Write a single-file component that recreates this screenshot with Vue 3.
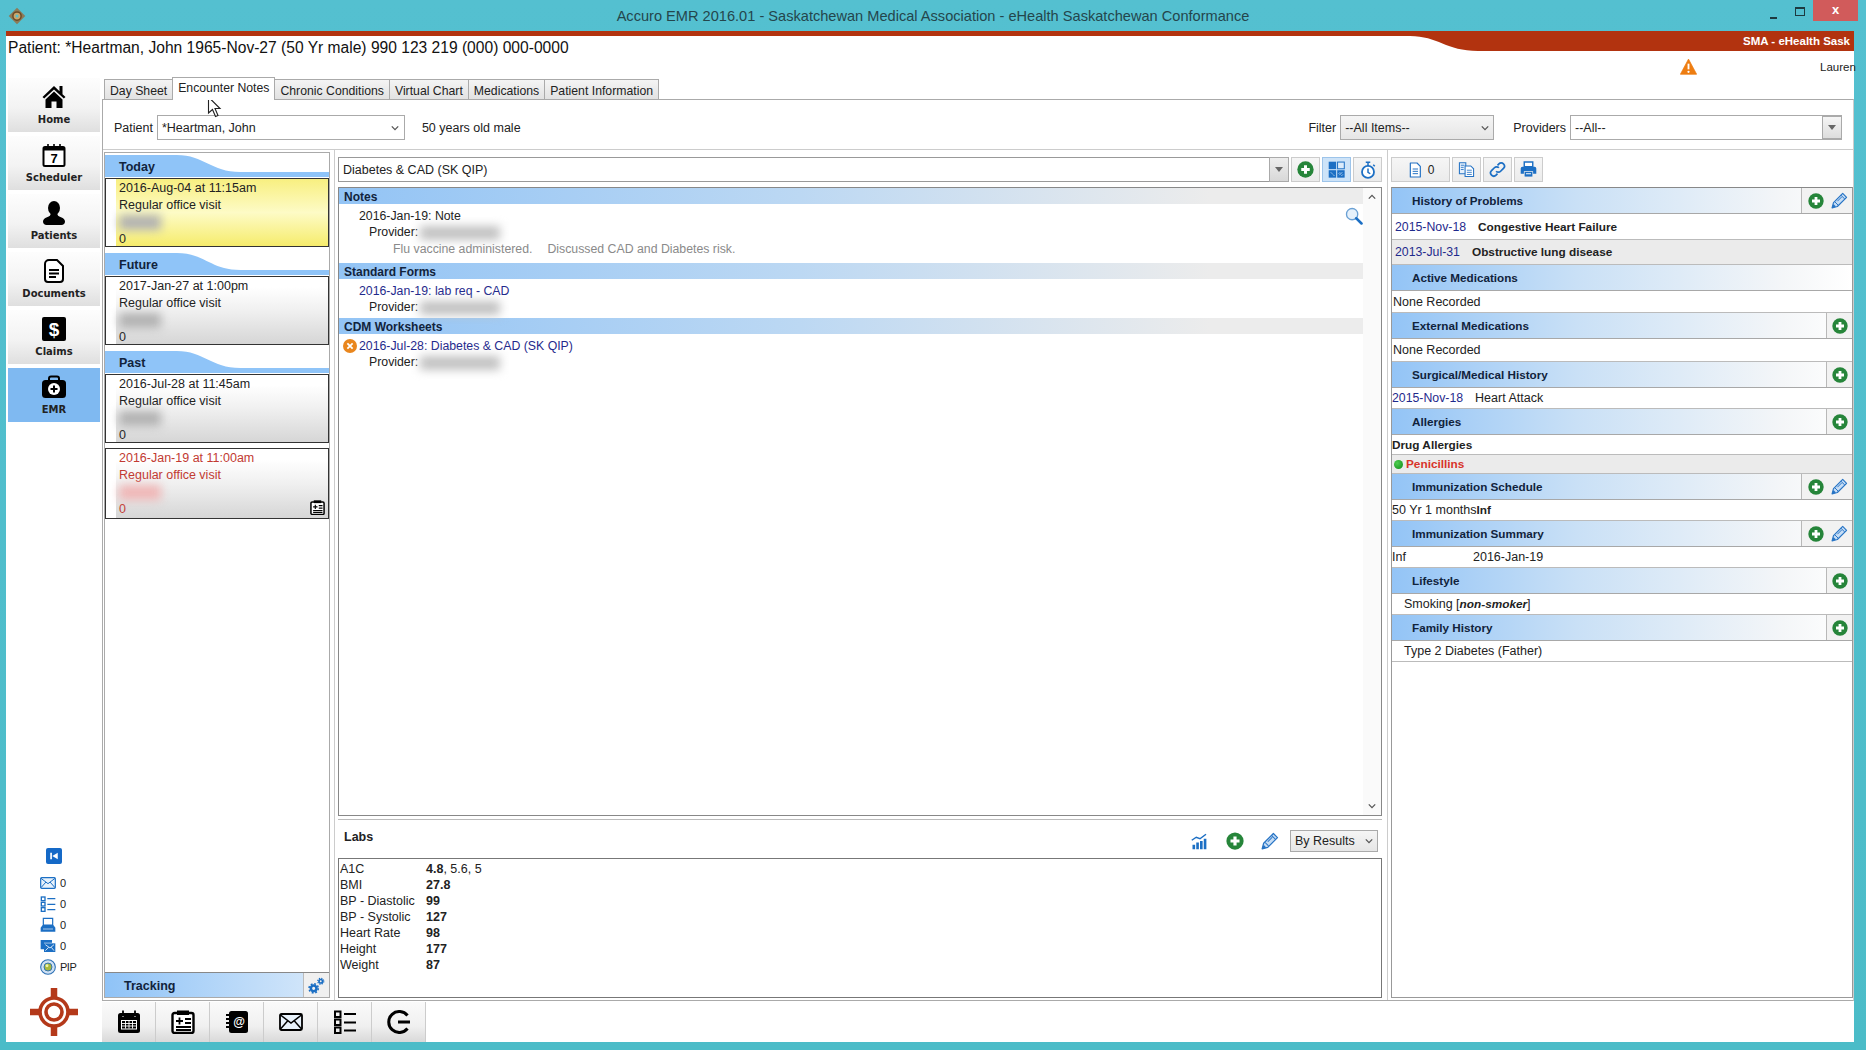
<template>
  <div class="app">
    <!-- icon sprite -->
    <svg class="sprite" aria-hidden="true">
      <defs>
        <symbol id="i-home" viewBox="0 0 24 24"><path d="M12 1 0.5 12l1.7 1.6L12 4.4l9.8 9.2 1.7-1.6-3-2.8V1h-3v5.3z"/><path d="M3.5 14.6 12 6.6l8.500 8V23H14.500v-6.500h-5V23H3.500z"/></symbol>
        <symbol id="i-cal" viewBox="0 0 24 24"><rect x="1.500" y="4" width="21" height="19" rx="1.500" fill="#fff" stroke="#000" stroke-width="2"/><path d="M1.500 4h21v3.500h-21z"/><path d="M6 1v5M12 1v5M18 1v5" stroke="#000" stroke-width="1.600"/><text x="12" y="20" text-anchor="middle" font-size="13" font-weight="700" font-family="Liberation Sans, sans-serif">7</text></symbol>
        <symbol id="i-person" viewBox="0 0 24 24"><ellipse cx="12" cy="7" rx="6" ry="7"/><path d="M8.500 12c.5 2.500-1 3.200-3.500 4.200C2.500 17.200 1 18.500 1 20.500 1 22.500 2.500 24 4.500 24h15c2 0 3.500-1.500 3.500-3.500 0-2-1.500-3.300-4-4.300-2.500-1-4-1.700-3.500-4.200z"/></symbol>
        <symbol id="i-doc" viewBox="0 0 24 24"><path d="M7 1h8l6 6v13a3 3 0 0 1-3 3H6a3 3 0 0 1-3-3V5a4 4 0 0 1 4-4z" fill="#fff" stroke="#000" stroke-width="2"/><path d="M7 11h10M7 14.500h10M7 18h7" stroke="#000" stroke-width="1.800"/></symbol>
        <symbol id="i-claim" viewBox="0 0 24 24"><rect width="24" height="24" rx="2"/><text x="12" y="19" text-anchor="middle" fill="#fff" font-size="19" font-weight="700" font-family="Liberation Sans, sans-serif">$</text></symbol>
        <symbol id="i-bag" viewBox="0 0 24 24"><path d="M7 6V3.500A2 2 0 0 1 9 1.500h6a2 2 0 0 1 2 2V6" fill="none" stroke="#000" stroke-width="2"/><rect y="5" width="24" height="18" rx="3.500"/><circle cx="12" cy="14" r="6" fill="#fff"/><path d="M12 10.500v7M8.500 14h7" stroke="#000" stroke-width="2"/></symbol>
        <symbol id="i-add" viewBox="0 0 24 24"><circle cx="12" cy="12" r="11.500" fill="#26853a"/><path d="M12 6v12M6 12h12" stroke="#fff" stroke-width="4.200"/></symbol>
        <symbol id="i-pencil" viewBox="0 0 24 24"><path d="M1.500 22.500 3.500 15 16.500 2l5.500 5.500L9 20.500z" fill="#c6ddf5" stroke="#2673c4" stroke-width="1.600" stroke-linejoin="round"/><path d="M14 4.500l5.500 5.500M5.500 14l4.500 4.500M9 13l6-6" fill="none" stroke="#2673c4" stroke-width="1.400"/><path d="M1.500 22.500 3.500 17l3.500 3.500z" fill="#2673c4"/></symbol>
        <symbol id="i-grid" viewBox="0 0 24 24"><rect x="1" y="1" width="10.500" height="10.500" fill="#1c6fc4"/><rect x="13.500" y="1.500" width="9.500" height="9.500" fill="#dcebfa" stroke="#1c6fc4" stroke-width="1.400"/><rect x="1" y="13" width="10.500" height="10.500" fill="#1c6fc4"/><rect x="13" y="13" width="10.500" height="10.500" fill="#1c6fc4"/><path d="M4 16l2 2M7 19l2 2M16 20l4-4M15 18l2-2M19 21l2-2" stroke="#cfe3f8" stroke-width="1.200"/></symbol>
        <symbol id="i-timer" viewBox="0 0 24 24"><circle cx="12" cy="14.500" r="8" fill="#fff" stroke="#1c6fc4" stroke-width="2.400"/><path d="M9 1.500h6M12 1.500v5M19 5l2 2M12 10v5l3 2" fill="none" stroke="#1c6fc4" stroke-width="2"/></symbol>
        <symbol id="i-page" viewBox="0 0 24 24"><path d="M5 1.500h10l5 5V22.500H5z" fill="#fff" stroke="#2673c4" stroke-width="1.800" stroke-linejoin="round"/><path d="M8.500 10.500h8M8.500 14h8M8.500 17.500h8" stroke="#2673c4" stroke-width="1.500"/></symbol>
        <symbol id="i-copy" viewBox="0 0 24 24"><path d="M2 2.500h9V18H2z" fill="#e6f0fb" stroke="#2673c4" stroke-width="1.500"/><path d="M10 7h8l4 4v11H10z" fill="#fff" stroke="#2673c4" stroke-width="1.500"/><path d="M12.500 13h7M12.500 16h7M12.500 19h7M4 6h5M4 9h4M4 12h4" stroke="#2673c4" stroke-width="1.200"/></symbol>
        <symbol id="i-link" viewBox="0 0 24 24"><g fill="none" stroke="#1c6fc4" stroke-width="2.400"><path d="M10 14.500a4.500 4.500 0 0 0 6.400 0l4-4a4.500 4.500 0 0 0-6.400-6.400l-2 2"/><path d="M14 9.500a4.500 4.500 0 0 0-6.400 0l-4 4a4.500 4.500 0 0 0 6.400 6.400l2-2"/></g></symbol>
        <symbol id="i-print" viewBox="0 0 24 24"><path d="M6 1.500h12V8H6z" fill="#fff" stroke="#1c6fc4" stroke-width="2"/><path d="M3.500 8h17A2.500 2.500 0 0 1 23 10.500V18h-4.500v-3.500h-13V18H1v-7.500A2.500 2.500 0 0 1 3.500 8z" fill="#1c6fc4"/><path d="M6.500 15.500h11V22h-11z" fill="#1c6fc4"/><path d="M8.500 18h7" stroke="#fff" stroke-width="1.400"/></symbol>
        <symbol id="i-search" viewBox="0 0 24 24"><circle cx="9.500" cy="9.500" r="7.500" fill="#e6f1fb" stroke="#6aa0d4" stroke-width="1.800"/><path d="M15 15l7 7" stroke="#1c6fc4" stroke-width="3.400" stroke-linecap="round"/></symbol>
        <symbol id="i-chart" viewBox="0 0 24 24"><path d="M2 17h3.500v6H2zM7 14h3.500v9H7zM12 12h3.500v11H12zM17 9h3.500v14H17z" fill="#1c6fc4"/><path d="M1 11l6-4 5 2 8-6" fill="none" stroke="#1c6fc4" stroke-width="2"/></symbol>
        <symbol id="i-warn" viewBox="0 0 24 24"><path d="M12 1.500 23.500 23H.5z" fill="#ee7d11" stroke="#ee7d11" stroke-linejoin="round"/><path d="M12 8v8" stroke="#fff" stroke-width="2.600"/><circle cx="12" cy="19.500" r="1.600" fill="#fff"/></symbol>
        <symbol id="i-gears" viewBox="0 0 24 24"><g fill="none" stroke="#1c6fc4"><circle cx="8" cy="16" r="4" stroke-width="3.600"/><circle cx="8" cy="16" r="6.500" stroke-width="2.200" stroke-dasharray="2.600 2.500"/><circle cx="18" cy="6" r="2.500" stroke-width="2.400"/><circle cx="18" cy="6" r="4.300" stroke-width="1.600" stroke-dasharray="1.800 1.600"/></g></symbol>
        <symbol id="i-mail" viewBox="0 0 24 24"><rect x="1" y="4" width="22" height="16" rx="1.500" fill="#e8f2fb" stroke="currentColor" stroke-width="1.800"/><path d="M1.500 5 12 13 22.500 5M1.500 19 9 10.500M22.500 19 15 10.500" fill="none" stroke="currentColor" stroke-width="1.500"/></symbol>
        <symbol id="i-list" viewBox="0 0 24 24"><g fill="none" stroke="currentColor"><rect x="2" y="1.500" width="5.500" height="5.500" stroke-width="2"/><rect x="2" y="9.500" width="5.500" height="5.500" stroke-width="2"/><rect x="2" y="17.500" width="5.500" height="5.500" stroke-width="2"/><path d="M11 4h12M11 12.500h12M11 20.500h12" stroke-width="2"/></g></symbol>
        <symbol id="i-fax" viewBox="0 0 24 24"><path d="M5 2h14v10H5z" fill="#fff" stroke="#1c6fc4" stroke-width="1.800"/><path d="M4 12h16l3 4v6H1v-6z" fill="#1c6fc4"/><path d="M5 18h14" stroke="#fff" stroke-width="1.400" stroke-dasharray="2 1"/></symbol>
        <symbol id="i-msgs" viewBox="0 0 24 24"><path d="M1 3h17v4H6v10H1z" fill="#1c6fc4"/><rect x="6" y="8" width="17" height="13" fill="#1c6fc4"/><path d="M8 10l7 5 6-5M8 19l5-5M21 19l-4-5" fill="none" stroke="#fff" stroke-width="1.200"/></symbol>
        <symbol id="i-pip" viewBox="0 0 24 24"><circle cx="12" cy="12" r="11" fill="#cfe0f3" stroke="#2a6fb4" stroke-width="1.600"/><circle cx="12" cy="12" r="6" fill="#a9b83c" stroke="#2a6fb4" stroke-width="1.400"/><circle cx="10.500" cy="10" r="2.200" fill="#f1f3a8"/></symbol>
        <symbol id="i-logo" viewBox="0 0 48 48"><g fill="none" stroke="#b4391a"><circle cx="24" cy="24" r="14" stroke-width="3.600"/><circle cx="24" cy="24" r="8" stroke-width="3.600"/><path d="M24 0v10M24 38v10M0 24h10M38 24h10" stroke-width="6.500"/></g></symbol>
        <symbol id="i-target" viewBox="0 0 24 24"><path d="M12 1 23 12 12 23 1 12z" fill="#8c7b58"/><circle cx="12" cy="12" r="5.500" fill="#c9a66b" stroke="#6d4a25" stroke-width="2"/><circle cx="12" cy="12" r="2" fill="#54c0d0"/></symbol>
        <symbol id="i-sched" viewBox="0 0 24 24"><rect x="1" y="3" width="22" height="20" rx="2.500"/><path d="M6 .5v5M18 .5v5" stroke="#000" stroke-width="1.800"/><path d="M6 6v1M18 6v1" stroke="#fff"/><path d="M4 10h16v9.500H4z" fill="#fff"/><path d="M5 11h14v7.500H5z"/><path d="M5 13.500h14M5 16h14M8.500 11v7.500M12 11v7.500M15.500 11v7.500" stroke="#fff" stroke-width=".9"/></symbol>
        <symbol id="i-note" viewBox="0 0 24 24"><rect x="1.500" y="3" width="21" height="20" rx="2" fill="#fff" stroke="#000" stroke-width="2.400"/><path d="M6 .5h12v4.500H6z"/><path d="M5 11h7M8.500 7.500v7M14 9h6M14 13h6M5 17h15M5 20h15" stroke="#000" stroke-width="1.800"/></symbol>
        <symbol id="i-book" viewBox="0 0 24 24"><rect x="4" y="1" width="19" height="22" rx="2.500"/><path d="M1 5h5M1 9h5M1 13h5M1 17h5" stroke="#000" stroke-width="1.800"/><text x="14" y="16" text-anchor="middle" fill="#fff" font-size="12" font-weight="700" font-family="Liberation Sans, sans-serif">@</text></symbol>
        <symbol id="i-logout" viewBox="0 0 24 24"><path d="M20.500 5.500a10.500 10.500 0 1 0 0 13" fill="none" stroke="#000" stroke-width="3"/><path d="M11 12h12" stroke="#000" stroke-width="3"/></symbol>
      </defs>
    </svg>

    <div class="titlebar">
      <svg class="ic s18"><use href="#i-target" /></svg>
      <div class="title">Accuro EMR 2016.01 - Saskatchewan Medical Association - eHealth Saskatchewan Conformance</div>
      <div class="win-controls">
        <span class="min"></span>
        <span class="max"></span>
        <span class="close">x</span>
      </div>
    </div>

    <div class="window">
      <div class="head">
        <svg class="swoosh" viewBox="0 0 1848 20" preserveAspectRatio="none">
          <path d="M0 0H1848V20H1472C1440 20 1432 5 1404 5H0z" fill="#b2330f" />
        </svg>
        <span class="brand">SMA - eHealth Sask</span>
        <div class="patient-line">Patient: *Heartman, John 1965-Nov-27 (50 Yr male) 990 123 219 (000) 000-0000</div>
        <div class="user-line">
          <svg class="ic s17"><use href="#i-warn" /></svg>
          <span class="user">Lauren</span>
        </div>
      </div>

      <div class="body">
        <aside class="sidebar">
          <div v-for="item in nav" :key="item.label" class="nav-btn" :class="{ active: item.active }">
            <svg class="ic s24"><use :href="'#i-' + item.icon" /></svg>
            <span>{{ item.label }}</span>
          </div>

          <div class="side-low">
            <div class="skip"><svg viewBox="0 0 12 12" width="10" height="10"><path d="M1.500 2h2v8h-2zM10.500 2v8L4 6zM4.500 2v8" fill="#fff" /></svg></div>
            <div v-for="s in statuses" :key="s.icon" class="status">
              <svg class="ic s16 blue"><use :href="'#i-' + s.icon" /></svg>
              <span :class="{ pip: s.icon === 'pip' }">{{ s.value }}</span>
            </div>
            <svg class="ic logo"><use href="#i-logo" /></svg>
          </div>
        </aside>

        <main class="main">
          <div class="tabs">
            <div v-for="tab in tabs" :key="tab" class="tab" :class="{ active: tab === 'Encounter Notes' }">{{ tab }}</div>
          </div>

          <div class="panel">
            <div class="filters">
              <label class="lbl">Patient</label>
              <div class="select patient-select">
                <span>*Heartman, John</span>
                <svg class="chev" viewBox="0 0 10 6"><path d="M1 1l4 4 4-4" /></svg>
              </div>
              <span class="age">50 years old male</span>
              <label class="lbl filter-lbl">Filter</label>
              <div class="select grey filter-select">
                <span>--All Items--</span>
                <svg class="chev" viewBox="0 0 10 6"><path d="M1 1l4 4 4-4" /></svg>
              </div>
              <label class="lbl prov-lbl">Providers</label>
              <div class="select prov-select">
                <span>--All--</span>
                <div class="drop"><i></i></div>
              </div>
            </div>

            <div class="workspace">
              <!-- appointments -->
              <section class="col-left">
                <div class="left-box">
                  <div class="visits">
                    <div v-for="group in groups" :key="group.title" class="group">
                      <div class="wave">
                        <svg viewBox="0 0 225 22" preserveAspectRatio="none">
                          <path d="M0 0H72C100 0 106 17 136 17H225V22H0z" fill="#8fc4f8" />
                        </svg>
                        <span>{{ group.title }}</span>
                      </div>
                      <div v-for="card in group.cards" :key="card.date" class="card" :class="card.kind">
                        <div class="card-fill">
                          <div>{{ card.date }}</div>
                          <div>Regular office visit</div>
                          <div class="card-blur"><i class="blur"></i></div>
                          <div>0</div>
                          <svg v-if="card.kind === 'past'" class="ic s15 card-note"><use href="#i-note" /></svg>
                        </div>
                      </div>
                    </div>
                  </div>
                  <div class="tracking">
                    <span>Tracking</span>
                    <div class="tracking-btn"><svg class="ic s17"><use href="#i-gears" /></svg></div>
                  </div>
                </div>
              </section>

              <!-- encounter notes -->
              <section class="col-center">
                <div class="combo-row">
                  <div class="select combo">
                    <span>Diabetes &amp; CAD (SK QIP)</span>
                    <div class="drop"><i></i></div>
                  </div>
                  <button class="tool"><svg class="ic s17"><use href="#i-add" /></svg></button>
                  <button class="tool on"><svg class="ic s17"><use href="#i-grid" /></svg></button>
                  <button class="tool"><svg class="ic s18"><use href="#i-timer" /></svg></button>
                </div>

                <div class="notes">
                  <div class="notes-body">
                    <div class="sec-head">Notes</div>
                    <div class="sec-body notes-sec">
                      <div class="line note-first">
                        <span class="i1">2016-Jan-19: Note</span>
                        <svg class="ic s18"><use href="#i-search" /></svg>
                      </div>
                      <div class="line i2">Provider: <i class="blur wide"></i></div>
                      <div class="line i3 muted"><span>Flu vaccine administered.</span><span>Discussed CAD and Diabetes risk.</span></div>
                    </div>
                    <div class="sec-head">Standard Forms</div>
                    <div class="sec-body forms-sec">
                      <div class="line i1 link">2016-Jan-19: lab req - CAD</div>
                      <div class="line i2">Provider: <i class="blur wide"></i></div>
                    </div>
                    <div class="sec-head">CDM Worksheets</div>
                    <div class="sec-body">
                      <div class="line cdm link">
                        <svg class="x-badge" viewBox="0 0 16 16"><circle cx="8" cy="8" r="8" fill="#e9861d" /><path d="M5 5l6 6M11 5l-6 6" stroke="#fff" stroke-width="2" /></svg>
                        2016-Jul-28: Diabetes &amp; CAD (SK QIP)
                      </div>
                      <div class="line i2">Provider: <i class="blur wide"></i></div>
                    </div>
                  </div>
                  <div class="scrollbar">
                    <svg class="chev up" viewBox="0 0 10 6"><path d="M1 5l4-4 4 4" /></svg>
                    <svg class="chev" viewBox="0 0 10 6"><path d="M1 1l4 4 4-4" /></svg>
                  </div>
                </div>

                <div class="labs">
                  <div class="labs-bar">
                    <strong>Labs</strong>
                    <svg class="ic s18 first"><use href="#i-chart" /></svg>
                    <svg class="ic s18"><use href="#i-add" /></svg>
                    <svg class="ic s18"><use href="#i-pencil" /></svg>
                    <div class="select grey results">
                      <span>By Results</span>
                      <svg class="chev" viewBox="0 0 10 6"><path d="M1 1l4 4 4-4" /></svg>
                    </div>
                  </div>
                  <div class="lab-box">
                    <div v-for="lab in labs" :key="lab.name" class="lab-row">
                      <span>{{ lab.name }}</span>
                      <span><b>{{ lab.value }}</b>{{ lab.rest }}</span>
                    </div>
                  </div>
                </div>
              </section>

              <!-- patient summary -->
              <section class="col-right">
                <div class="right-tools">
                  <button class="tool count"><svg class="ic s16"><use href="#i-page" /></svg><span>0</span></button>
                  <button class="tool"><svg class="ic s17"><use href="#i-copy" /></svg></button>
                  <button class="tool"><svg class="ic s17"><use href="#i-link" /></svg></button>
                  <button class="tool"><svg class="ic s17"><use href="#i-print" /></svg></button>
                </div>
                <div class="summary">
                  <template v-for="sec in summary" :key="sec.title">
                    <div class="sum-head">
                      <span class="sum-title">{{ sec.title }}</span>
                      <div v-if="sec.add" class="sum-btns" :class="{ two: sec.edit }">
                        <svg class="ic s16"><use href="#i-add" /></svg>
                        <svg v-if="sec.edit" class="ic s17"><use href="#i-pencil" /></svg>
                      </div>
                    </div>
                    <div
                      v-for="(row, i) in sec.rows"
                      :key="i"
                      class="sum-row"
                      :class="{ alt: row.alt }"
                      :style="{ height: row.h + 'px', paddingLeft: row.x + 'px' }"
                    >
                      <i v-if="row.dot" class="dot"></i>
                      <span v-for="(p, j) in row.parts" :key="j" :class="p.c">{{ p.t }}</span>
                    </div>
                  </template>
                </div>
              </section>
            </div>
          </div>

          <div class="bottom-bar">
            <button v-for="b in bottom" :key="b" class="bottom-btn"><svg class="ic s24"><use :href="'#i-' + b" /></svg></button>
          </div>
        </main>
      </div>

      <!-- mouse pointer -->
      <svg class="cursor" viewBox="0 0 14 22" width="15" height="22">
        <path d="M1 1v16l4-3.500 3 7 2.500-1-3-7H12.500z" fill="#fff" stroke="#222" stroke-width="1.100" />
      </svg>
    </div>
  </div>
</template>

<script setup>
const nav = [
  { label: 'Home', icon: 'home' },
  { label: 'Scheduler', icon: 'cal' },
  { label: 'Patients', icon: 'person' },
  { label: 'Documents', icon: 'doc' },
  { label: 'Claims', icon: 'claim' },
  { label: 'EMR', icon: 'bag', active: true },
]

const statuses = [
  { icon: 'mail', value: '0' },
  { icon: 'list', value: '0' },
  { icon: 'fax', value: '0' },
  { icon: 'msgs', value: '0' },
  { icon: 'pip', value: 'PIP' },
]

const tabs = ['Day Sheet', 'Encounter Notes', 'Chronic Conditions', 'Virtual Chart', 'Medications', 'Patient Information']

const groups = [
  { title: 'Today', cards: [{ date: '2016-Aug-04 at 11:15am', kind: 'today' }] },
  { title: 'Future', cards: [{ date: '2017-Jan-27 at 1:00pm', kind: '' }] },
  {
    title: 'Past',
    cards: [
      { date: '2016-Jul-28 at 11:45am', kind: '' },
      { date: '2016-Jan-19 at 11:00am', kind: 'past' },
    ],
  },
]

const labs = [
  { name: 'A1C', value: '4.8', rest: ', 5.6, 5' },
  { name: 'BMI', value: '27.8' },
  { name: 'BP - Diastolic', value: '99' },
  { name: 'BP - Systolic', value: '127' },
  { name: 'Heart Rate', value: '98' },
  { name: 'Height', value: '177' },
  { name: 'Weight', value: '87' },
]

const summary = [
  {
    title: 'History of Problems',
    add: true,
    edit: true,
    rows: [
      { h: 26, x: 3, parts: [{ t: '2015-Nov-18', c: 'date' }, { t: 'Congestive Heart Failure', c: 'b gap' }] },
      { h: 25, x: 3, alt: true, parts: [{ t: '2013-Jul-31', c: 'date' }, { t: 'Obstructive lung disease', c: 'b gap' }] },
    ],
  },
  { title: 'Active Medications', rows: [{ h: 22, x: 1, parts: [{ t: 'None Recorded' }] }] },
  { title: 'External Medications', add: true, rows: [{ h: 23, x: 1, parts: [{ t: 'None Recorded' }] }] },
  {
    title: 'Surgical/Medical History',
    add: true,
    rows: [{ h: 21, x: 0, parts: [{ t: '2015-Nov-18', c: 'date' }, { t: 'Heart Attack', c: 'gap' }] }],
  },
  {
    title: 'Allergies',
    add: true,
    rows: [
      { h: 20, x: 0, parts: [{ t: 'Drug Allergies', c: 'b' }] },
      { h: 19, x: 2, alt: true, dot: true, parts: [{ t: 'Penicillins', c: 'allergy' }] },
    ],
  },
  {
    title: 'Immunization Schedule',
    add: true,
    edit: true,
    rows: [{ h: 21, x: 0, parts: [{ t: '50 Yr 1 months' }, { t: 'Inf', c: 'b' }] }],
  },
  {
    title: 'Immunization Summary',
    add: true,
    edit: true,
    rows: [{ h: 21, x: 0, parts: [{ t: 'Inf', c: 'inf' }, { t: '2016-Jan-19' }] }],
  },
  {
    title: 'Lifestyle',
    add: true,
    rows: [{ h: 21, x: 12, parts: [{ t: 'Smoking [' }, { t: 'non-smoker', c: 'bi' }, { t: ']' }] }],
  },
  { title: 'Family History', add: true, rows: [{ h: 21, x: 12, parts: [{ t: 'Type 2 Diabetes (Father)' }] }] },
]

const bottom = ['sched', 'note', 'book', 'mail', 'list', 'logout']
</script>

<style>
html,
body {
  margin: 0;
  background: #50bfce;
}
</style>

<style scoped>
* {
  box-sizing: border-box;
}

.app {
  width: 1866px;
  height: 1050px;
  display: flex;
  flex-direction: column;
  overflow: hidden;
  background: linear-gradient(#54c0d0, #4bbcc8);
  font-family: 'Liberation Sans', Arial, sans-serif;
  font-size: 12.500px;
  color: #222;
}

.sprite {
  position: absolute;
  width: 0;
  height: 0;
}

.ic {
  display: block;
  flex: none;
}
.s15 { width: 15px; height: 15px; }
.s16 { width: 16px; height: 16px; }
.s17 { width: 17px; height: 17px; }
.s18 { width: 18px; height: 18px; }
.s24 { width: 24px; height: 24px; }
.blue { color: #1c6fc4; }

/* title bar */
.titlebar {
  height: 31px;
  flex: none;
  display: grid;
  grid-template-columns: 1fr auto 1fr;
  align-items: center;
  padding: 0 8px;
}
.title {
  font-size: 14.600px;
  color: #24464c;
  margin-top: 1px;
}
.win-controls {
  display: flex;
  justify-content: flex-end;
  align-items: flex-start;
  height: 31px;
}
.min {
  width: 7px;
  height: 2px;
  margin-top: 17px;
  background: #1d3a40;
}
.max {
  width: 10px;
  height: 9px;
  margin: 7px 8px 0 18px;
  border: 1px solid #1d3a40;
  border-top-width: 2px;
}
.close {
  width: 45px;
  height: 21px;
  background: #d15b5b;
  color: #fff;
  text-align: center;
  font-size: 13px;
  font-weight: 700;
  line-height: 19px;
}

/* window */
.window {
  position: relative;
  flex: 1;
  margin: 0 12px 8px 6px;
  background: #fff;
  display: flex;
  flex-direction: column;
  min-height: 0;
}
.head {
  position: relative;
  height: 46px;
  flex: none;
}
.swoosh {
  position: absolute;
  top: 0;
  left: 0;
  width: 100%;
  height: 20px;
}
.brand {
  position: absolute;
  top: 4px;
  right: 4px;
  color: #fff;
  font-size: 11.500px;
  font-weight: 700;
}
.patient-line {
  position: relative;
  padding: 7px 0 0 2px;
  font-size: 15.600px;
  line-height: 19px;
  color: #111;
}
.user-line {
  display: flex;
  justify-content: flex-end;
  align-items: center;
  margin-top: 1px;
}
.user {
  margin-left: 123px;
  font-size: 11.500px;
  width: 34px;
}
.cursor {
  position: absolute;
  top: 65px;
  left: 201px;
}

.body {
  flex: 1;
  display: flex;
  min-height: 0;
}

/* left nav */
.sidebar {
  width: 96px;
  flex: none;
  display: flex;
  flex-direction: column;
  gap: 4px;
  padding: 1px 2px 0 2px;
}
.nav-btn {
  height: 54px;
  flex: none;
  display: flex;
  flex-direction: column;
  align-items: center;
  padding-top: 7px;
  gap: 5px;
  background: linear-gradient(#fdfdfd, #f3f3f3 55%, #dfdfdf);
  font-family: 'DejaVu Sans', sans-serif;
  font-size: 10px;
  font-weight: 700;
  color: #222;
}
.nav-btn.active {
  background: #7fb9f1;
}
.side-low {
  margin-top: auto;
  display: flex;
  flex-direction: column;
}
.skip {
  width: 16px;
  height: 16px;
  margin: 0 0 8px 38px;
  background: #1569c7;
  border-radius: 2px;
  display: flex;
  align-items: center;
  justify-content: center;
}
.status {
  height: 21px;
  display: flex;
  align-items: center;
  gap: 4px;
  padding-left: 32px;
  font-size: 11px;
}
.pip {
  letter-spacing: -0.5px;
}
.logo {
  width: 48px;
  height: 48px;
  margin: 11px 0 6px 22px;
}

/* tabs */
.main {
  flex: 1;
  min-width: 0;
  display: flex;
  flex-direction: column;
}
.tabs {
  height: 22px;
  flex: none;
  display: flex;
  align-items: flex-end;
  padding-left: 2px;
}
.tab {
  height: 20px;
  padding: 1px 5px 0;
  line-height: 20px;
  font-size: 12.250px;
  background: linear-gradient(#f4f4f4, #e2e2e2);
  border: 1px solid #aaa;
  border-bottom: 0;
  margin-right: -1px;
  white-space: nowrap;
}
.tab.active {
  position: relative;
  height: 23px;
  margin-bottom: -1px;
  padding-top: 0;
  background: #fff;
  line-height: 21px;
  z-index: 1;
}

.panel {
  flex: 1;
  min-height: 0;
  display: flex;
  flex-direction: column;
  border: 1px solid #aaa;
  border-right-color: #ccc;
}
.filters {
  height: 50px;
  flex: none;
  display: flex;
  align-items: center;
  padding: 6px 11px 0 11px;
  border-bottom: 1px solid #ccc;
}
.lbl {
  margin-right: 4px;
}
.select {
  height: 25px;
  display: flex;
  align-items: center;
  justify-content: space-between;
  border: 1px solid #aaa;
  background: #fff;
  padding-left: 4px;
  white-space: nowrap;
}
.select.grey {
  background: linear-gradient(#f5f5f5, #e6e6e6);
  padding-right: 4px;
}
.chev {
  width: 8px;
  height: 6px;
  fill: none;
  stroke: #555;
  stroke-width: 1.600;
}
.patient-select {
  width: 248px;
  padding-right: 5px;
}
.age {
  margin-left: 17px;
}
.filter-lbl {
  margin-left: auto;
}
.filter-select {
  width: 154px;
}
.prov-lbl {
  margin-left: 19px;
}
.prov-select {
  width: 272px;
}
.drop {
  width: 20px;
  height: 100%;
  background: linear-gradient(#f5f5f5, #ddd);
  border: 1px solid #aaa;
  margin-right: -1px;
  display: flex;
  align-items: center;
  justify-content: center;
}
.drop i {
  border-style: solid;
  border-width: 5px 4px 0 4px;
  border-color: #666 transparent transparent transparent;
}

.workspace {
  flex: 1;
  min-height: 0;
  display: grid;
  grid-template-columns: 232px 1053px 465px;
}

/* left column */
.col-left {
  padding: 2px 4px 2px 1px;
  border-right: 1px solid #ccc;
  min-height: 0;
}
.left-box {
  height: 100%;
  display: flex;
  flex-direction: column;
  border: 1px solid #aaa;
}
.visits {
  flex: 1;
  padding-top: 2px;
}
.group {
  margin-bottom: 6px;
}
.wave {
  position: relative;
  height: 23px;
}
.wave svg {
  position: absolute;
  top: 0;
  left: 0;
  width: 100%;
  height: 22px;
}
.wave span {
  position: relative;
  display: block;
  padding: 5px 0 0 14px;
  font-weight: 700;
  color: #11233c;
}
.card {
  position: relative;
  height: 69px;
  border: 1.500px solid #333;
  background: #fff;
  margin-bottom: 5px;
}
.card:last-child {
  margin-bottom: 0;
}
.card.past {
  height: 71px;
}
.card-fill {
  height: 100%;
  margin-left: 10px;
  padding: 1px 0 0 3px;
  line-height: 17px;
  background: linear-gradient(#fff 15%, #f0f0f0 50%, #d6d6d6);
}
.today .card-fill {
  background: linear-gradient(#f8ef80, #fdfbc6 50%, #f6ec6c);
}
.past .card-fill {
  color: #c23a32;
}
.card-blur {
  height: 17px;
}
.blur {
  display: inline-block;
  width: 42px;
  height: 15px;
  vertical-align: middle;
  background: #b2b2b2;
  filter: blur(5px);
}
.past .blur {
  background: #f0b6b6;
}
.blur.wide {
  width: 80px;
  height: 14px;
  background: #c2c2c2;
  margin-left: -2px;
}
.card-note {
  position: absolute;
  right: 3px;
  bottom: 3px;
}
.tracking {
  height: 25px;
  flex: none;
  display: flex;
  align-items: center;
  justify-content: space-between;
  border-top: 1px solid #888;
  padding-left: 19px;
  background: linear-gradient(90deg, #8fc3f7, #d8e9fa 100%);
  font-weight: 700;
  color: #11233c;
}
.tracking span {
  margin-top: 1px;
}
.tracking-btn {
  width: 26px;
  height: 100%;
  display: flex;
  align-items: center;
  justify-content: center;
  background: #f0f0f0;
  border-left: 1px solid #bbb;
}

/* center column */
.col-center {
  display: flex;
  flex-direction: column;
  min-height: 0;
  padding: 0 5px 2px 3px;
  border-right: 1px solid #ccc;
}
.combo-row {
  height: 37px;
  flex: none;
  display: flex;
  align-items: flex-start;
  gap: 2px;
  padding-top: 7px;
}
.combo {
  flex: 1;
  height: 25px;
  border-color: #999;
}
.combo .drop {
  height: 25px;
  background: linear-gradient(#eee, #d8d8d8);
}
.tool {
  width: 29px;
  height: 25px;
  padding: 0;
  display: flex;
  align-items: center;
  justify-content: center;
  background: linear-gradient(#f6f6f6, #ebebeb);
  border: 1px solid #ccc;
}
.tool.on {
  background: #cde3f8;
  border-color: #9dc4ea;
}
.notes {
  flex: 1;
  min-height: 0;
  display: flex;
  border: 1px solid #888;
}
.notes-body {
  flex: 1;
  min-width: 0;
}
.sec-head {
  height: 16px;
  padding-left: 5px;
  line-height: 18px;
  font-size: 12px;
  font-weight: 700;
  color: #11233c;
  background: linear-gradient(90deg, #93c4f5, #bcd8f3 45%, #ececec 85%);
}
.sec-body {
  padding-top: 4px;
  padding-bottom: 3px;
}
.notes-sec {
  padding-bottom: 6px;
}
.forms-sec {
  padding-bottom: 3px;
}
.line {
  height: 16px;
  line-height: 16px;
  white-space: nowrap;
  font-size: 12.300px;
}
.note-first {
  display: flex;
  justify-content: space-between;
  align-items: center;
}
.i1 {
  padding-left: 20px;
}
.i2 {
  padding-left: 30px;
  color: #222;
}
.i3 {
  padding-left: 54px;
  height: 17px;
  line-height: 18px;
}
.muted {
  color: #8a8a8a;
}
.muted span + span {
  margin-left: 15px;
}
.link {
  color: #1f2a8c;
}
.cdm {
  display: flex;
  align-items: center;
  gap: 2px;
  padding-left: 4px;
}
.x-badge {
  width: 14px;
  height: 14px;
  flex: none;
}
.scrollbar {
  width: 18px;
  flex: none;
  display: flex;
  flex-direction: column;
  justify-content: space-between;
  align-items: center;
  padding: 6px 0;
  background: #fafafa;
}

/* labs */
.labs {
  height: 179px;
  flex: none;
  margin-top: 3px;
  border-top: 1px solid #bbb;
  display: flex;
  flex-direction: column;
}
.labs-bar {
  height: 38px;
  flex: none;
  display: flex;
  align-items: center;
  gap: 17px;
  padding: 3px 0 0 6px;
}
.labs-bar strong {
  margin-top: -8px;
  font-size: 12.500px;
  color: #222;
}
.labs-bar .first {
  margin-left: auto;
}
.results {
  width: 88px;
  height: 22px;
  margin: 0 4px 0 -6px;
  font-size: 12.500px;
  border-color: #aaa;
}
.lab-box {
  flex: 1;
  min-height: 0;
  border: 1px solid #777;
  padding: 2px 0 0 1px;
}
.lab-row {
  display: grid;
  grid-template-columns: 86px 1fr;
  height: 16px;
  line-height: 16px;
  font-size: 12.500px;
}

/* right column */
.col-right {
  padding: 0 0 2px 3px;
  display: flex;
  flex-direction: column;
  min-height: 0;
}
.right-tools {
  height: 37px;
  flex: none;
  display: flex;
  align-items: flex-start;
  gap: 2px;
  padding-top: 7px;
}
.count {
  width: 59px;
  gap: 5px;
  font-size: 12px;
  color: #222;
}
.summary {
  flex: 1;
  min-height: 0;
  border: 1px solid #999;
  border-top-color: #888;
}
.sum-head {
  height: 26px;
  display: flex;
  align-items: stretch;
  border-bottom: 1px solid #a8a8a8;
  background: linear-gradient(90deg, #93c4f6, #c9e0f6 40%, #f4f6f8 85%, #fff);
  font-weight: 700;
  color: #11233c;
}
.sum-title {
  flex: 1;
  padding-left: 20px;
  line-height: 25px;
  font-size: 11.700px;
}
.sum-btns {
  width: 26px;
  display: flex;
  align-items: center;
  justify-content: space-between;
  padding: 0 5px;
  background: #f2f2f2;
  border-left: 1px solid #b8b8b8;
}
.sum-btns.two {
  width: 51px;
  padding: 0 4px 0 6px;
}
.sum-row {
  display: flex;
  align-items: center;
  white-space: pre;
  border-bottom: 1px solid #bbb;
  font-size: 12.500px;
}
.sum-row.alt {
  background: #ebebeb;
}
.date {
  color: #1f2a8c;
  font-size: 12.300px;
}
.b {
  font-weight: 700;
  font-size: 11.800px;
}
.bi {
  font-weight: 700;
  font-style: italic;
  font-size: 11.800px;
}
.gap {
  margin-left: 12px;
}
.inf {
  width: 81px;
}
.allergy {
  color: #d8342a;
  font-weight: 700;
  font-size: 11.800px;
}
.dot {
  width: 9px;
  height: 9px;
  border-radius: 50%;
  margin-right: 3px;
  background: radial-gradient(circle at 35% 35%, #4fce4f, #0d8a18);
}

/* bottom toolbar */
.bottom-bar {
  height: 40px;
  flex: none;
  margin-top: 1px;
  display: flex;
  align-self: flex-start;
}
.bottom-btn {
  width: 54px;
  height: 40px;
  padding: 0;
  display: flex;
  align-items: center;
  justify-content: center;
  background: linear-gradient(#fafafa, #f0f0f0 60%, #d9d9d9);
  border: 0;
  border-right: 1px solid #ccc;
  color: #000;
}
</style>
